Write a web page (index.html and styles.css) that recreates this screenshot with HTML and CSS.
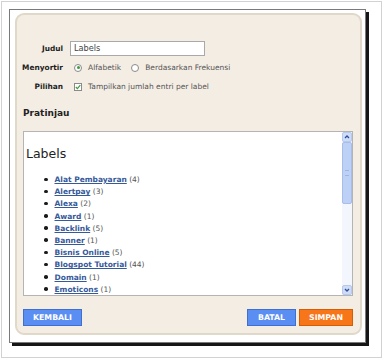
FILE: index.html
```html
<!DOCTYPE html>
<html>
<head>
<meta charset="utf-8">
<link rel="stylesheet" href="styles.css">
</head>
<body>
<div class="outer">
  <div class="shot">
    <div class="panel">
      <div class="form">
        <div class="lbl">Judul</div>
        <div class="ctl"><div class="input">Labels</div></div>
        <div class="lbl">Menyortir</div>
        <div class="ctl opts">
          <span class="radio on"></span><span class="opt">Alfabetik</span>
          <span class="radio second"></span><span class="opt">Berdasarkan Frekuensi</span>
        </div>
        <div class="lbl">Pilihan</div>
        <div class="ctl opts">
          <span class="check"><svg width="6" height="6" viewBox="0 0 6 6"><path d="M0.8 3 L2.4 4.6 L5.3 1.2" fill="none" stroke="#3f9a3f" stroke-width="1.2"/></svg></span><span class="opt">Tampilkan jumlah entri per label</span>
        </div>
      </div>
      <div class="section">Pratinjau</div>
      <div class="preview">
        <div class="pv-content">
          <div class="pv-title">Labels</div>
          <ul class="labels">
            <li><a>Alat Pembayaran</a> (4)</li>
            <li><a>Alertpay</a> (3)</li>
            <li><a>Alexa</a> (2)</li>
            <li><a>Award</a> (1)</li>
            <li><a>Backlink</a> (5)</li>
            <li><a>Banner</a> (1)</li>
            <li><a>Bisnis Online</a> (5)</li>
            <li><a>Blogspot Tutorial</a> (44)</li>
            <li><a>Domain</a> (1)</li>
            <li><a>Emoticons</a> (1)</li>
          </ul>
        </div>
        <div class="scrollbar">
          <div class="sb-btn"><svg width="8" height="8" viewBox="0 0 8 8"><path d="M2 5 L4 3 L6 5" fill="none" stroke="#2d4f9a" stroke-width="1.3"/></svg></div>
          <div class="sb-thumb"><span class="grip"></span></div>
          <div class="sb-track"></div>
          <div class="sb-btn"><svg width="8" height="8" viewBox="0 0 8 8"><path d="M2 3 L4 5 L6 3" fill="none" stroke="#2d4f9a" stroke-width="1.3"/></svg></div>
        </div>
      </div>
      <div class="buttons">
        <div class="btn blue back">KEMBALI</div>
        <div class="spacer"></div>
        <div class="btn blue cancel">BATAL</div>
        <div class="btn orange save">SIMPAN</div>
      </div>
    </div>
  </div>
</div>
</body>
</html>
```

FILE: styles.css
```css
body {
  margin: 0;
  background: #fff;
  font-family: "DejaVu Sans", Verdana, sans-serif;
}
.outer {
  margin: 1px;
  width: 381px;
  height: 357px;
  box-sizing: border-box;
  border: 1px solid #d2d2d2;
  padding: 7px 0 0 7px;
}
.shot {
  width: 357px;
  height: 334px;
  box-sizing: border-box;
  border: 1px solid #7a7a7a;
  box-shadow: 3px 3px 0 #161616;
  background: #fff;
  padding: 3px 3px 7px 5px;
}
.panel {
  height: 100%;
  box-sizing: border-box;
  background: #f4ede4;
  border: 2px solid #e0d8c8;
  border-radius: 9px;
  padding: 24px 7px 0 6px;
  display: flex;
  flex-direction: column;
}
.form {
  display: grid;
  grid-template-columns: 40px 1fr;
  grid-auto-rows: 19px;
  column-gap: 7px;
  align-items: center;
}
.lbl {
  justify-self: end;
  white-space: nowrap;
  font-weight: bold;
  font-size: 7.4px;
  color: #1e1e1e;
}
.ctl {
  display: flex;
  align-items: center;
}
.opts {
  padding-left: 4px;
}
.input {
  width: 135px;
  height: 15px;
  box-sizing: border-box;
  border: 1px solid #a9a9a9;
  background: #fff;
  font-size: 8.2px;
  line-height: 13px;
  padding-left: 3px;
  color: #444;
}
.radio {
  width: 8px;
  height: 8px;
  box-sizing: border-box;
  border: 1px solid #8a8a8a;
  border-radius: 50%;
  background: #fff;
  display: flex;
  align-items: center;
  justify-content: center;
  margin-right: 6px;
}
.radio.on::after {
  content: "";
  width: 3px;
  height: 3px;
  border-radius: 50%;
  background: #3e9a3e;
}
.radio.second {
  margin-left: 10px;
}
.check {
  width: 8px;
  height: 8px;
  box-sizing: border-box;
  border: 1px solid #8a8a8a;
  background: #fff;
  display: flex;
  align-items: center;
  justify-content: center;
  margin-right: 6px;
}
.opt {
  font-size: 7.5px;
  color: #555;
  white-space: nowrap;
}
.section {
  margin-top: 10px;
  font-weight: bold;
  font-size: 9px;
  line-height: 14px;
  color: #222;
}
.preview {
  margin-top: 11px;
  height: 165px;
  box-sizing: border-box;
  border: 1px solid #b4b4b4;
  background: #fff;
  display: flex;
}
.pv-content {
  flex: 1;
  overflow: hidden;
  padding: 14px 0 0 2px;
}
.pv-title {
  font-size: 12.5px;
  line-height: 15px;
  color: #222;
}
.labels {
  margin: 13px 0 0 0;
  padding: 0 0 0 18px;
  list-style: none;
  font-size: 7.5px;
  line-height: 12.2px;
  color: #555;
}
.labels li {
  height: 12.2px;
  white-space: nowrap;
}
.labels li::before {
  content: "";
  display: inline-block;
  width: 3.5px;
  height: 3.5px;
  border-radius: 50%;
  background: #1a1a1a;
  margin-right: 7px;
  vertical-align: 1px;
}
.labels a {
  color: #36599a;
  font-weight: bold;
  text-decoration: underline;
}
.scrollbar {
  width: 10px;
  display: flex;
  flex-direction: column;
  background: #f3f6fc;
}
.sb-btn {
  height: 10px;
  box-sizing: border-box;
  background: #cfdcf6;
  border: 1px solid #b7c9ef;
  border-radius: 2px;
  display: flex;
  align-items: center;
  justify-content: center;
}
.sb-thumb {
  height: 62px;
  box-sizing: border-box;
  background: #bdd0f5;
  border: 1px solid #a8bdea;
  border-radius: 2px;
  display: flex;
  align-items: center;
  justify-content: center;
}
.grip {
  width: 4px;
  height: 4px;
  border-top: 1px solid #9fb4e3;
  border-bottom: 1px solid #9fb4e3;
}
.sb-track {
  flex: 1;
}
.buttons {
  margin-top: 13px;
  display: flex;
  gap: 3px;
}
.spacer {
  flex: 1;
}
.btn {
  height: 17px;
  box-sizing: border-box;
  color: #fff;
  font-weight: bold;
  font-size: 7.8px;
  display: flex;
  align-items: center;
  justify-content: center;
}
.blue {
  background: #5b8ef2;
  border: 1px solid #3f6fcf;
}
.orange {
  background: #f8761a;
  border: 1px solid #d45d06;
}
.back { width: 59px; }
.cancel { width: 49px; }
.save { width: 54px; }
```
